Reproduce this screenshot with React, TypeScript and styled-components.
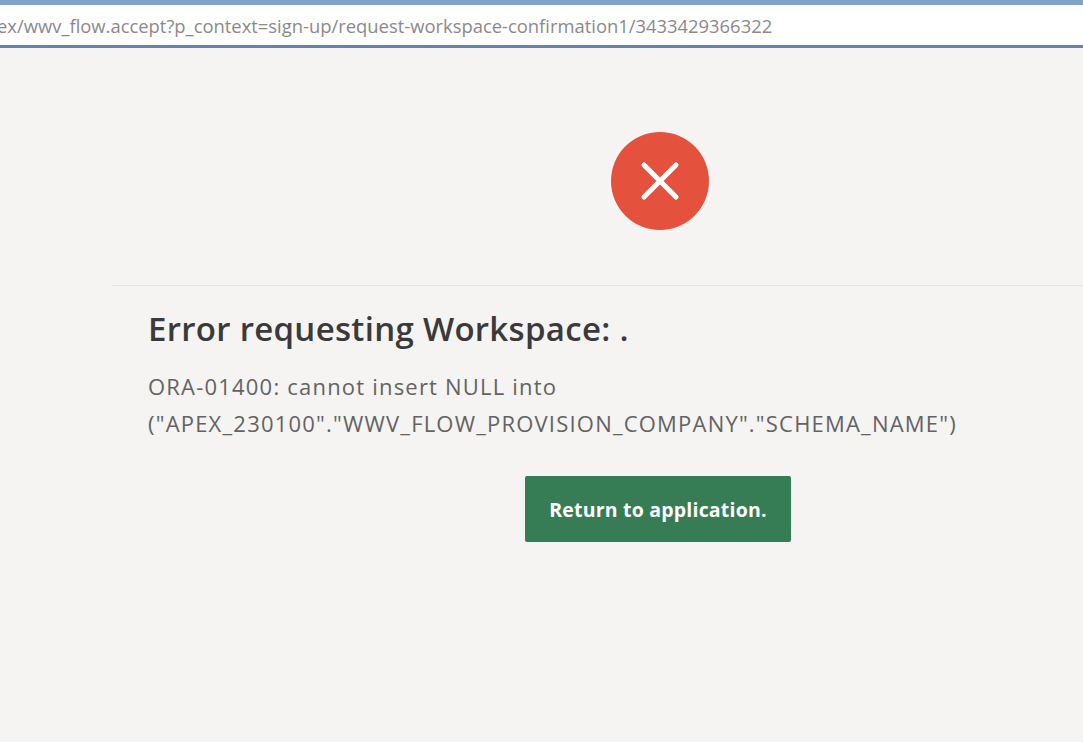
import React from "react";
import styled, { createGlobalStyle } from "styled-components";

const Global = createGlobalStyle`
  html, body { margin: 0; padding: 0; background: #f5f4f2; }
  body { font-family: "Open Sans", "Liberation Sans", sans-serif; }
`;

const Page = styled.div`
  width: 1083px;
  height: 742px;
  overflow: hidden;
  background: #f5f4f2;
`;

const AddressBar = styled.div`
  height: 40px;
  border-top: 5px solid #7fa1c6;
  border-bottom: 3px solid #6384ab;
  background: #fff;
  display: flex;
  align-items: center;
  color: #8a8a8a;
  font-size: 18.4px;
  white-space: nowrap;
  text-indent: -3px;
`;

const Icon = styled.div`
  display: flex;
  justify-content: center;
  padding: 84px 0 0 236px;
  height: 153px;
`;

const Divider = styled.div`
  margin-left: 112px;
  border-top: 1px solid #e6e5e3;
`;

const Body = styled.div`
  padding: 20px 0 0 148px;
`;

const Title = styled.h1`
  margin: 0;
  font-size: 33px;
  font-weight: 600;
  letter-spacing: 0.3px;
  color: #3a3a3a;
  line-height: 46px;
`;

const Message = styled.p`
  margin: 16px 0 0;
  font-size: 22px;
  letter-spacing: 1.2px;
  color: #636363;
  line-height: 37px;
  font-weight: 400;
`;

const Actions = styled.div`
  padding: 34px 0 0 525px;
`;

const Button = styled.button`
  width: 266px;
  height: 66px;
  border: none;
  border-radius: 2px;
  background: #367d55;
  color: #fff;
  font-family: inherit;
  font-size: 19.5px;
  letter-spacing: 0.2px;
  font-weight: 700;
`;

export default function App() {
  return (
    <Page>
      <Global />
      <AddressBar>ex/wwv_flow.accept?p_context=sign-up/request-workspace-confirmation1/3433429366322</AddressBar>
      <Icon>
        <svg width="98" height="98" viewBox="0 0 98 98">
          <circle cx="49" cy="49" r="49" fill="#e4513d" />
          <path d="M33 33 L65 65 M65 33 L33 65" stroke="#fff" strokeWidth="5" strokeLinecap="round" />
        </svg>
      </Icon>
      <Divider />
      <Body>
        <Title>Error requesting Workspace: .</Title>
        <Message>
          ORA-01400: cannot insert NULL into
          <br />
          ("APEX_230100"."WWV_FLOW_PROVISION_COMPANY"."SCHEMA_NAME")
        </Message>
      </Body>
      <Actions>
        <Button>Return to application.</Button>
      </Actions>
    </Page>
  );
}
